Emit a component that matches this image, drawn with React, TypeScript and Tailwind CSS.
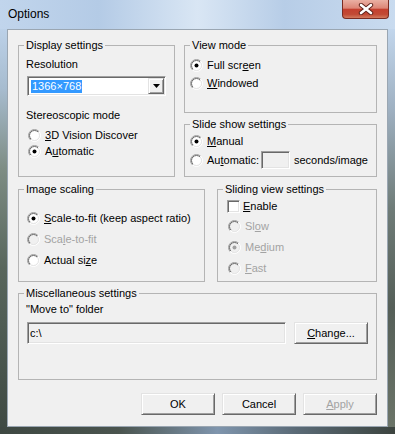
import type { ReactNode } from 'react'

const sunken =
  'border border-t-[#a0a0a0] border-l-[#a0a0a0] border-b-white border-r-white shadow-[inset_1px_1px_#696969,inset_-1px_-1px_#e3e3e3]'
const raised =
  'border border-t-[#e3e3e3] border-l-[#e3e3e3] border-b-[#696969] border-r-[#696969] shadow-[inset_1px_1px_#ffffff,inset_-1px_-1px_#a0a0a0] bg-[#f0f0f0]'

function Radio({ checked, disabled }: { checked?: boolean; disabled?: boolean }) {
  return (
    <svg width="13" height="13" viewBox="0 0 13 13" className="shrink-0">
      <defs>
        <linearGradient id="rad-out" x1="0" y1="0" x2="1" y2="1">
          <stop offset="0.5" stopColor="#a0a0a0" />
          <stop offset="0.5" stopColor="#ffffff" />
        </linearGradient>
        <linearGradient id="rad-in" x1="0" y1="0" x2="1" y2="1">
          <stop offset="0.5" stopColor="#696969" />
          <stop offset="0.5" stopColor="#e3e3e3" />
        </linearGradient>
      </defs>
      <circle cx="6.5" cy="6.5" r="6" fill="none" stroke="url(#rad-out)" />
      <circle cx="6.5" cy="6.5" r="5" fill={disabled ? '#f0f0f0' : '#ffffff'} stroke="url(#rad-in)" />
      {checked && <circle cx="6.5" cy="6.5" r="2" fill={disabled ? '#a0a0a0' : '#000000'} />}
    </svg>
  )
}

function RadioRow({
  checked,
  disabled,
  className = '',
  children,
}: {
  checked?: boolean
  disabled?: boolean
  className?: string
  children: ReactNode
}) {
  return (
    <div className={`flex h-[16px] items-center gap-[4px] ${className}`}>
      <Radio checked={checked} disabled={disabled} />
      <span className={`leading-[13px] ${disabled ? 'text-[#a3a3a3]' : ''}`}>{children}</span>
    </div>
  )
}

function Group({ title, className = '', children }: { title: string; className?: string; children: ReactNode }) {
  return (
    <fieldset className={`min-w-0 border border-[#b4b4b4] ${className}`}>
      <legend className="ml-[5px] px-[2px] leading-[13px]">{title}</legend>
      {children}
    </fieldset>
  )
}

function Button({ children, disabled }: { children: ReactNode; disabled?: boolean }) {
  return (
    <div
      className={`flex h-[22px] w-[74px] items-center justify-center ${raised} ${disabled ? 'text-[#a3a3a3]' : ''}`}
    >
      {children}
    </div>
  )
}

export default function App() {
  return (
    <div className="flex h-[434px] w-[395px] flex-col bg-[#4a564e] font-['Liberation_Sans',Arial,sans-serif] text-[11px] text-black">
      {/* title bar */}
      <div className="flex h-[29px] items-start bg-[linear-gradient(90deg,#c1d5ec_0%,#b4cbe6_25%,#d9e6f4_50%,#b7cde7_72%,#c9dbef_100%)]">
        <span className="ml-[8px] mt-[7px] text-[12px] leading-[15px]">Options</span>
        <div className="ml-auto mr-[6px] flex h-[19px] w-[47px] items-center justify-center rounded-b-[4px] border border-t-0 border-[#7a2c22] bg-[linear-gradient(180deg,#eab0a3_0%,#dd8677_45%,#c4402f_52%,#c24a35_80%,#d27a5e_100%)]">
          <svg width="16" height="12" viewBox="0 0 16 12">
            <path d="M3 2 L13 10 M13 2 L3 10" stroke="#5b1f17" strokeWidth="4.4" strokeLinecap="round" />
            <path d="M3 2 L13 10 M13 2 L3 10" stroke="#ffffff" strokeWidth="2.6" strokeLinecap="round" />
          </svg>
        </div>
      </div>

      <div className="flex flex-1">
        <div className="w-[7px] bg-[linear-gradient(180deg,#bcd1e8_0%,#a7bccf_15%,#7e8d84_35%,#58665c_60%,#3f4a43_100%)]" />

        {/* client area */}
        <div className="flex flex-1 flex-col border border-[#9aa6b2] bg-[#f0f0f0] px-[10px] pb-[11px] pt-[9px]">
          {/* row 1 */}
          <div className="flex h-[138px] gap-[9px]">
            <Group title="Display settings" className="w-[157px]">
              <div className="flex flex-col pl-[7px]">
                <div className="mt-[6px] leading-[13px]">Resolution</div>
                <div className={`ml-[1px] mt-[5px] flex h-[20px] w-[139px] items-center bg-white ${sunken}`}>
                  <span className="ml-[3px] bg-[#3399ff] px-[1px] leading-[13px] text-white">1366×768</span>
                  <div className={`ml-auto mr-[1px] flex h-[16px] w-[16px] items-center justify-center ${raised}`}>
                    <svg width="7" height="4" viewBox="0 0 7 4">
                      <path d="M0 0 H7 L3.5 4 Z" fill="#000" />
                    </svg>
                  </div>
                </div>
                <div className="mt-[13px] leading-[13px]">Stereoscopic mode</div>
                <RadioRow className="ml-[2px] mt-[5px]">
                  <span className="underline">3</span>D Vision Discover
                </RadioRow>
                <RadioRow checked className="ml-[2px]">
                  A<span className="underline">u</span>tomatic
                </RadioRow>
              </div>
            </Group>

            <div className="flex w-[193px] flex-col">
              <Group title="View mode" className="h-[74px]">
                <div className="flex flex-col pl-[5px]">
                  <RadioRow checked className="mt-[5px]">
                    Full scr<span className="underline">e</span>en
                  </RadioRow>
                  <RadioRow className="mt-[2px]">
                    <span className="underline">W</span>indowed
                  </RadioRow>
                </div>
              </Group>
              <Group title="Slide show settings" className="mt-[5px] flex-1">
                <div className="flex flex-col pl-[5px]">
                  <RadioRow checked className="mt-[2px]">
                    <span className="underline">M</span>anual
                  </RadioRow>
                  <div className="mt-[2px] flex h-[18px] items-center">
                    <Radio />
                    <span className="ml-[4px] leading-[13px]">
                      Au<span className="underline">t</span>omatic:
                    </span>
                    <div className={`ml-[2px] h-[18px] w-[29px] bg-[#f0f0f0] ${sunken}`} />
                    <span className="ml-[4px] leading-[13px]">seconds/image</span>
                  </div>
                </div>
              </Group>
            </div>
          </div>

          {/* row 2 */}
          <div className="mt-[6px] flex h-[99px] gap-[12px]">
            <Group title="Image scaling" className="w-[187px]">
              <div className="flex flex-col pl-[8px]">
                <RadioRow checked className="mt-[14px]">
                  <span className="underline">S</span>cale-to-fit (keep aspect ratio)
                </RadioRow>
                <RadioRow disabled className="mt-[5px]">
                  Sca<span className="underline">l</span>e-to-fit
                </RadioRow>
                <RadioRow className="mt-[5px]">
                  Actual si<span className="underline">z</span>e
                </RadioRow>
              </div>
            </Group>
            <Group title="Sliding view settings" className="flex-1">
              <div className="flex flex-col pl-[9px]">
                <div className="mt-[2px] flex h-[16px] items-center gap-[3px]">
                  <div className={`h-[13px] w-[13px] bg-white ${sunken}`} />
                  <span className="leading-[13px]">
                    <span className="underline">E</span>nable
                  </span>
                </div>
                <RadioRow disabled className="ml-[1px] mt-[4px]">
                  Sl<span className="underline">o</span>w
                </RadioRow>
                <RadioRow disabled checked className="ml-[1px] mt-[5px]">
                  Me<span className="underline">d</span>ium
                </RadioRow>
                <RadioRow disabled className="ml-[1px] mt-[5px]">
                  <span className="underline">F</span>ast
                </RadioRow>
              </div>
            </Group>
          </div>

          {/* row 3 */}
          <Group title="Miscellaneous settings" className="mt-[5px] h-[93px]">
            <div className="flex flex-col pl-[7px]">
              <div className="mt-[3px] leading-[13px]">"Move to" folder</div>
              <div className="mt-[6px] flex items-center">
                <div className={`ml-[1px] flex h-[22px] w-[259px] items-center bg-[#f0f0f0] pl-[2px] ${sunken}`}>
                  <span className="leading-[13px]">c:\</span>
                </div>
                <div className="ml-[8px]">
                  <Button>
                    <span className="underline">C</span>hange...
                  </Button>
                </div>
              </div>
            </div>
          </Group>

          {/* buttons */}
          <div className="mt-[13px] flex justify-end gap-[7px]">
            <Button>OK</Button>
            <Button>Cancel</Button>
            <Button disabled>
              <span className="underline">A</span>pply
            </Button>
          </div>
        </div>

        <div className="w-[7px] bg-[linear-gradient(180deg,#c2d6ec_0%,#9fb1c2_20%,#6f7c78_45%,#555f58_70%,#6b7468_100%)]" />
      </div>

      <div className="h-[7px] bg-[linear-gradient(90deg,#3e4842_0%,#4a544e_30%,#7f95ad_55%,#5a6a76_75%,#3c443f_100%)]" />
    </div>
  )
}
